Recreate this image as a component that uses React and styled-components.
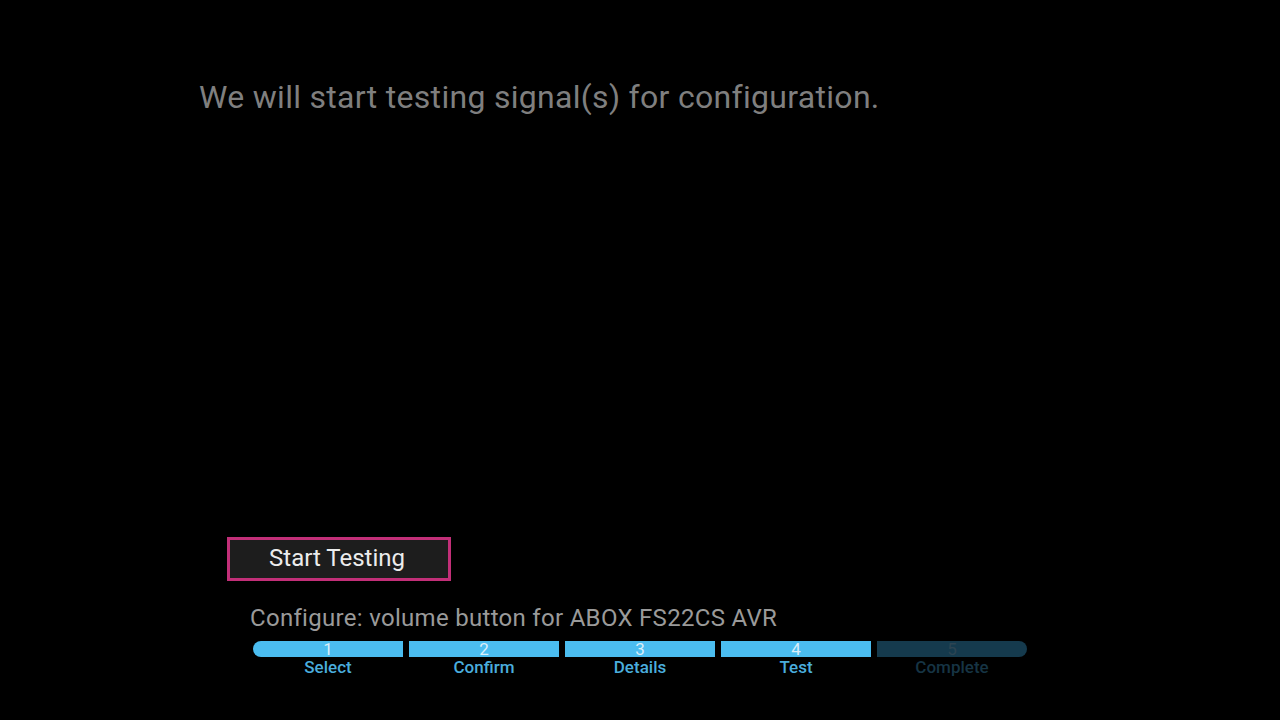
import React from "react";
import styled, { createGlobalStyle } from "styled-components";

const Global = createGlobalStyle`
  html, body { margin: 0; padding: 0; background: #000; }
  body { font-family: Roboto, "Noto Sans", "Liberation Sans", sans-serif; }
`;

const Screen = styled.div`
  width: 1280px;
  height: 720px;
  background: #000;
  display: flex;
  flex-direction: column;
  overflow: hidden;
`;

const Headline = styled.h1`
  margin: 76px 0 0 199px;
  font-size: 32px;
  line-height: 42px;
  font-weight: 400;
  letter-spacing: 0.3px;
  color: #7f7f7f;
`;

const Bottom = styled.div`
  margin-top: auto;
  padding: 0 0 43px 227px;
  display: flex;
  flex-direction: column;
  align-items: flex-start;
`;

const Button = styled.button`
  width: 224px;
  height: 44px;
  box-sizing: border-box;
  border: 3px solid #c22f78;
  background: #1d1d1d;
  color: #ececec;
  font-family: inherit;
  font-size: 24px;
  padding: 0 4px 3px 0;
  text-align: center;
`;

const Configure = styled.div`
  margin: 21px 0 0 23px;
  font-size: 24px;
  line-height: 32px;
  letter-spacing: 0.3px;
  color: #9a9a9a;
`;

const Steps = styled.div`
  margin: 7px 0 0 26px;
  display: flex;
  gap: 6px;
`;

const Step = styled.div`
  width: 150px;
  display: flex;
  flex-direction: column;
  align-items: center;
`;

const Bar = styled.div`
  width: 100%;
  height: 16px;
  background: ${p => (p.$done ? "#4bbdf0" : "#153a4d")};
  border-radius: ${p => p.$radius};
  color: ${p => (p.$done ? "#d9eef9" : "#2c4452")};
  font-size: 17px;
  line-height: 16px;
  text-align: center;
`;

const Label = styled.div`
  font-size: 17px;
  line-height: 20px;
  font-weight: 500;
  color: ${p => (p.$done ? "#4aaddd" : "#163444")};
`;

const steps = ["Select", "Confirm", "Details", "Test", "Complete"];

export default function App() {
  return (
    <Screen>
      <Global />
      <Headline>We will start testing signal(s) for configuration.</Headline>
      <Bottom>
        <Button>Start Testing</Button>
        <Configure>Configure: volume button for ABOX FS22CS AVR</Configure>
        <Steps>
          {steps.map((s, i) => {
            const done = i < 4;
            const radius =
              i === 0 ? "8px 0 0 8px" : i === steps.length - 1 ? "0 8px 8px 0" : "0";
            return (
              <Step key={s}>
                <Bar $done={done} $radius={radius}>{i + 1}</Bar>
                <Label $done={done}>{s}</Label>
              </Step>
            );
          })}
        </Steps>
      </Bottom>
    </Screen>
  );
}
